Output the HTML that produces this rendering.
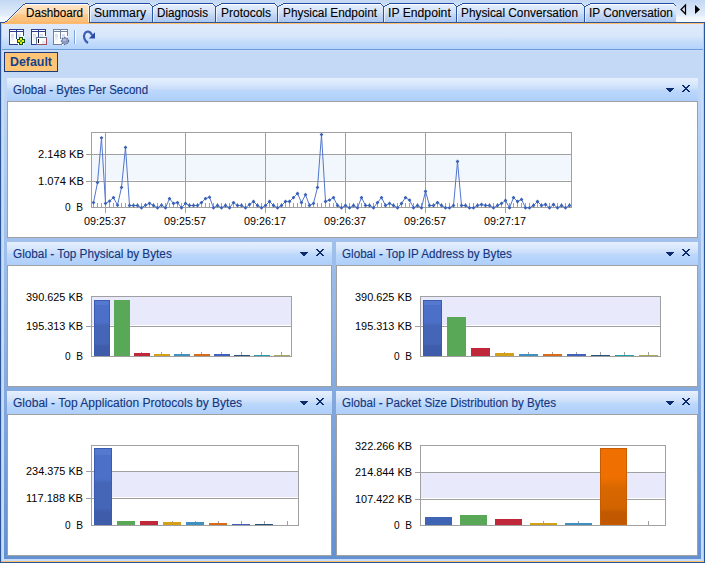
<!DOCTYPE html><html><head><meta charset="utf-8"><style>
html,body{margin:0;padding:0;}
body{width:705px;height:563px;overflow:hidden;position:relative;background:#c4d9f6;font-family:'Liberation Sans', sans-serif;}
.a{position:absolute;}
</style></head><body>
<div class="a" style="left:0;top:0;width:705px;height:22px;background:linear-gradient(to bottom,#c3d8f4 0px,#e5eefb 16px,#f1f6fd 17px,#f5f9fe 22px)"></div>
<div class="a" style="left:0;top:22px;width:705px;height:541px;background:linear-gradient(to bottom,#c4d9f6 0px,#c4d9f6 55px,#b6d1f5 110px,#6390d0 537px)"></div>
<div class="a" style="left:0;top:22px;width:703px;height:539px;border:1px solid #2c5697"></div>
<div class="a" style="left:1px;top:23px;width:701px;height:537px;border:1px solid #ffbf6f"></div>
<div class="a" style="left:2px;top:24px;width:2px;height:535px;background:#c6dcf8"></div>
<div class="a" style="left:701px;top:24px;width:2px;height:535px;background:#c6dcf8"></div>
<div class="a" style="left:2px;top:559px;width:701px;height:2px;background:#c6dcf8"></div>
<div class="a" style="left:2px;top:24px;width:701px;height:25px;background:linear-gradient(to bottom,#dfeafb 0px,#d8e7fb 12px,#c3dcfb 18px,#b3d3fb 25px)"></div>
<div class="a" style="left:2px;top:49px;width:701px;height:1px;background:#6b9bd8"></div>
<div class="a" style="left:2px;top:50px;width:701px;height:1px;background:#c9ddf9"></div>
<svg class="a" style="left:0;top:0" width="705" height="26" shape-rendering="crispEdges"><defs><linearGradient id="tg" x1="0" y1="0" x2="0" y2="1"><stop offset="0" stop-color="#e8f0fc"/><stop offset="0.5" stop-color="#d2e1f7"/><stop offset="0.55" stop-color="#c6d9f5"/><stop offset="1" stop-color="#aac4ef"/></linearGradient><linearGradient id="og" x1="0" y1="0" x2="0" y2="1"><stop offset="0" stop-color="#fee6cb"/><stop offset="0.5" stop-color="#fdd8ac"/><stop offset="0.56" stop-color="#fcca8e"/><stop offset="1" stop-color="#fbb76a"/></linearGradient><clipPath id="tclip"><rect x="0" y="0" width="676" height="26"/></clipPath></defs><g clip-path="url(#tclip)"><polygon points="89,23 89,6 95,3 150,3 152,5 152,23" fill="url(#tg)"/><rect x="96" y="4" width="54" height="1" fill="#ffffff"/><rect x="90" y="7" width="1" height="15" fill="#f0f6fe" opacity="0.8"/><rect x="95" y="3" width="55" height="1" fill="#1f4ca0"/><rect x="89" y="6" width="1" height="17" fill="#2a55a3"/><rect x="90" y="6" width="1" height="1" fill="#2a55a3"/><rect x="91" y="5" width="2" height="1" fill="#2a55a3"/><rect x="93" y="4" width="2" height="1" fill="#2a55a3"/><rect x="150" y="4" width="1" height="1" fill="#2a55a3"/><rect x="151" y="5" width="1" height="1" fill="#2a55a3"/><polygon points="152,23 152,6 158,3 213,3 215,5 215,23" fill="url(#tg)"/><rect x="159" y="4" width="54" height="1" fill="#ffffff"/><rect x="153" y="7" width="1" height="15" fill="#f0f6fe" opacity="0.8"/><rect x="158" y="3" width="55" height="1" fill="#1f4ca0"/><rect x="152" y="6" width="1" height="17" fill="#2a55a3"/><rect x="153" y="6" width="1" height="1" fill="#2a55a3"/><rect x="154" y="5" width="2" height="1" fill="#2a55a3"/><rect x="156" y="4" width="2" height="1" fill="#2a55a3"/><rect x="213" y="4" width="1" height="1" fill="#2a55a3"/><rect x="214" y="5" width="1" height="1" fill="#2a55a3"/><polygon points="215,23 215,6 221,3 275,3 277,5 277,23" fill="url(#tg)"/><rect x="222" y="4" width="53" height="1" fill="#ffffff"/><rect x="216" y="7" width="1" height="15" fill="#f0f6fe" opacity="0.8"/><rect x="221" y="3" width="54" height="1" fill="#1f4ca0"/><rect x="215" y="6" width="1" height="17" fill="#2a55a3"/><rect x="216" y="6" width="1" height="1" fill="#2a55a3"/><rect x="217" y="5" width="2" height="1" fill="#2a55a3"/><rect x="219" y="4" width="2" height="1" fill="#2a55a3"/><rect x="275" y="4" width="1" height="1" fill="#2a55a3"/><rect x="276" y="5" width="1" height="1" fill="#2a55a3"/><polygon points="277,23 277,6 283,3 381,3 383,5 383,23" fill="url(#tg)"/><rect x="284" y="4" width="97" height="1" fill="#ffffff"/><rect x="278" y="7" width="1" height="15" fill="#f0f6fe" opacity="0.8"/><rect x="283" y="3" width="98" height="1" fill="#1f4ca0"/><rect x="277" y="6" width="1" height="17" fill="#2a55a3"/><rect x="278" y="6" width="1" height="1" fill="#2a55a3"/><rect x="279" y="5" width="2" height="1" fill="#2a55a3"/><rect x="281" y="4" width="2" height="1" fill="#2a55a3"/><rect x="381" y="4" width="1" height="1" fill="#2a55a3"/><rect x="382" y="5" width="1" height="1" fill="#2a55a3"/><polygon points="383,23 383,6 389,3 454,3 456,5 456,23" fill="url(#tg)"/><rect x="390" y="4" width="64" height="1" fill="#ffffff"/><rect x="384" y="7" width="1" height="15" fill="#f0f6fe" opacity="0.8"/><rect x="389" y="3" width="65" height="1" fill="#1f4ca0"/><rect x="383" y="6" width="1" height="17" fill="#2a55a3"/><rect x="384" y="6" width="1" height="1" fill="#2a55a3"/><rect x="385" y="5" width="2" height="1" fill="#2a55a3"/><rect x="387" y="4" width="2" height="1" fill="#2a55a3"/><rect x="454" y="4" width="1" height="1" fill="#2a55a3"/><rect x="455" y="5" width="1" height="1" fill="#2a55a3"/><polygon points="456,23 456,6 462,3 582,3 584,5 584,23" fill="url(#tg)"/><rect x="463" y="4" width="119" height="1" fill="#ffffff"/><rect x="457" y="7" width="1" height="15" fill="#f0f6fe" opacity="0.8"/><rect x="462" y="3" width="120" height="1" fill="#1f4ca0"/><rect x="456" y="6" width="1" height="17" fill="#2a55a3"/><rect x="457" y="6" width="1" height="1" fill="#2a55a3"/><rect x="458" y="5" width="2" height="1" fill="#2a55a3"/><rect x="460" y="4" width="2" height="1" fill="#2a55a3"/><rect x="582" y="4" width="1" height="1" fill="#2a55a3"/><rect x="583" y="5" width="1" height="1" fill="#2a55a3"/><polygon points="584,23 584,6 590,3 674,3 676,5 676,23" fill="url(#tg)"/><rect x="591" y="4" width="83" height="1" fill="#ffffff"/><rect x="585" y="7" width="1" height="15" fill="#f0f6fe" opacity="0.8"/><rect x="590" y="3" width="84" height="1" fill="#1f4ca0"/><rect x="584" y="6" width="1" height="17" fill="#2a55a3"/><rect x="585" y="6" width="1" height="1" fill="#2a55a3"/><rect x="586" y="5" width="2" height="1" fill="#2a55a3"/><rect x="588" y="4" width="2" height="1" fill="#2a55a3"/><rect x="674" y="4" width="1" height="1" fill="#2a55a3"/><rect x="675" y="5" width="1" height="1" fill="#2a55a3"/></g><rect x="0" y="22" width="705" height="1" fill="#2c5697"/><polygon points="5,23 5,22 24,3 88,3 89,4 89,24 1,24 1,23" fill="url(#og)"/><rect x="7" y="20" width="1" height="1" fill="#2a55a3"/><rect x="8" y="20" width="1" height="1" fill="#fff3e3"/><rect x="8" y="19" width="1" height="1" fill="#2a55a3"/><rect x="9" y="19" width="1" height="1" fill="#fff3e3"/><rect x="9" y="18" width="1" height="1" fill="#2a55a3"/><rect x="10" y="18" width="1" height="1" fill="#fff3e3"/><rect x="10" y="17" width="1" height="1" fill="#2a55a3"/><rect x="11" y="17" width="1" height="1" fill="#fff3e3"/><rect x="11" y="16" width="1" height="1" fill="#2a55a3"/><rect x="12" y="16" width="1" height="1" fill="#fff3e3"/><rect x="12" y="15" width="1" height="1" fill="#2a55a3"/><rect x="13" y="15" width="1" height="1" fill="#fff3e3"/><rect x="13" y="14" width="1" height="1" fill="#2a55a3"/><rect x="14" y="14" width="1" height="1" fill="#fff3e3"/><rect x="14" y="13" width="1" height="1" fill="#2a55a3"/><rect x="15" y="13" width="1" height="1" fill="#fff3e3"/><rect x="15" y="12" width="1" height="1" fill="#2a55a3"/><rect x="16" y="12" width="1" height="1" fill="#fff3e3"/><rect x="16" y="11" width="1" height="1" fill="#2a55a3"/><rect x="17" y="11" width="1" height="1" fill="#fff3e3"/><rect x="17" y="10" width="1" height="1" fill="#2a55a3"/><rect x="18" y="10" width="1" height="1" fill="#fff3e3"/><rect x="18" y="9" width="1" height="1" fill="#2a55a3"/><rect x="19" y="9" width="1" height="1" fill="#fff3e3"/><rect x="19" y="8" width="1" height="1" fill="#2a55a3"/><rect x="20" y="8" width="1" height="1" fill="#fff3e3"/><rect x="20" y="7" width="1" height="1" fill="#2a55a3"/><rect x="21" y="7" width="1" height="1" fill="#fff3e3"/><rect x="21" y="6" width="1" height="1" fill="#2a55a3"/><rect x="22" y="6" width="1" height="1" fill="#fff3e3"/><rect x="22" y="5" width="1" height="1" fill="#2a55a3"/><rect x="23" y="5" width="1" height="1" fill="#fff3e3"/><rect x="5" y="21" width="2" height="1" fill="#2a55a3"/><rect x="23" y="4" width="2" height="1" fill="#2a55a3"/><rect x="25" y="3" width="63" height="1" fill="#1f4ca0"/><rect x="25" y="4" width="62" height="1" fill="#ffffff"/><rect x="88" y="4" width="1" height="1" fill="#2a55a3"/><rect x="88" y="5" width="1" height="17" fill="#fff3e4"/><rect x="0" y="22" width="1" height="1" fill="#2c5697"/><rect x="1" y="23" width="88" height="1" fill="#fdb96c"/><rect x="5" y="22" width="83" height="1" fill="#fbb86a"/><polygon points="685.5,5 685.5,14 681,9.5" fill="none" stroke="#000" stroke-width="1.25" shape-rendering="auto"/><polygon points="695,5 695,14 700,9.5" fill="#000" shape-rendering="auto"/></svg>
<div class="a" style="left:0;top:0;width:676px;height:24px;overflow:hidden"><div style="position:absolute;left:25.5px;top:3px;font:normal 12px/20px 'Liberation Sans', sans-serif;color:#000;white-space:nowrap;-webkit-text-stroke:0.12px #000;transform:scaleX(0.9710);transform-origin:0 0;">Dashboard</div><div style="position:absolute;left:93.5px;top:3px;font:normal 12px/20px 'Liberation Sans', sans-serif;color:#000;white-space:nowrap;-webkit-text-stroke:0.12px #000;transform:scaleX(1.0129);transform-origin:0 0;">Summary</div><div style="position:absolute;left:156.5px;top:3px;font:normal 12px/20px 'Liberation Sans', sans-serif;color:#000;white-space:nowrap;-webkit-text-stroke:0.12px #000;transform:scaleX(0.9679);transform-origin:0 0;">Diagnosis</div><div style="position:absolute;left:220.5px;top:3px;font:normal 12px/20px 'Liberation Sans', sans-serif;color:#000;white-space:nowrap;-webkit-text-stroke:0.12px #000;transform:scaleX(0.9996);transform-origin:0 0;">Protocols</div><div style="position:absolute;left:282.5px;top:3px;font:normal 12px/20px 'Liberation Sans', sans-serif;color:#000;white-space:nowrap;-webkit-text-stroke:0.12px #000;transform:scaleX(0.9854);transform-origin:0 0;">Physical Endpoint</div><div style="position:absolute;left:387.5px;top:3px;font:normal 12px/20px 'Liberation Sans', sans-serif;color:#000;white-space:nowrap;-webkit-text-stroke:0.12px #000;transform:scaleX(1.0154);transform-origin:0 0;">IP Endpoint</div><div style="position:absolute;left:460.5px;top:3px;font:normal 12px/20px 'Liberation Sans', sans-serif;color:#000;white-space:nowrap;-webkit-text-stroke:0.12px #000;transform:scaleX(0.9855);transform-origin:0 0;">Physical Conversation</div><div style="position:absolute;left:588.5px;top:3px;font:normal 12px/20px 'Liberation Sans', sans-serif;color:#000;white-space:nowrap;-webkit-text-stroke:0.12px #000;transform:scaleX(0.9839);transform-origin:0 0;">IP Conversation</div></div>
<svg class="a" style="left:0;top:24px" width="120" height="26" shape-rendering="crispEdges">
<defs><linearGradient id="ig" x1="0" y1="0" x2="0" y2="1"><stop offset="0" stop-color="#d2dbec"/><stop offset="1" stop-color="#ffffff"/></linearGradient>
<g id="tbl">
<rect x="0" y="0" width="15" height="16" fill="#ffffff"/>
<rect x="2" y="5" width="3" height="9" fill="url(#ig)"/><rect x="9" y="5" width="3" height="9" fill="url(#ig)"/>
<rect x="0" y="0" width="15" height="1" fill="currentColor"/><rect x="0" y="2" width="15" height="1" fill="currentColor"/>
<rect x="0" y="0" width="1" height="16" fill="currentColor"/><rect x="14" y="0" width="1" height="7" fill="currentColor"/>
<rect x="7" y="0" width="1" height="10" fill="currentColor"/><rect x="0" y="15" width="9" height="1" fill="currentColor"/>
</g></defs>
<g transform="translate(9,5)" style="color:#2e3d8e"><use href="#tbl"/>
<rect x="10" y="8" width="4" height="8" fill="#0b5a10"/><rect x="8" y="10" width="8" height="4" fill="#0b5a10"/>
<rect x="11" y="9" width="2" height="6" fill="#ecec10"/><rect x="9" y="11" width="6" height="2" fill="#ecec10"/>
<rect x="11" y="11" width="2" height="2" fill="#5aa05a"/>
</g>
<g transform="translate(31,5)" style="color:#2e3d8e"><use href="#tbl"/>
<rect x="5" y="8" width="11" height="8" fill="#5b7294"/>
<rect x="6" y="9" width="9" height="6" fill="#ffffff"/><rect x="11" y="12" width="4" height="3" fill="#e6e8ee"/>
<rect x="6" y="15" width="10" height="1" fill="#a05060"/><rect x="15" y="9" width="1" height="7" fill="#a05060"/>
<rect x="7" y="10" width="1" height="4" fill="#000"/>
</g>
<g transform="translate(53,5)" style="color:#6f80a2"><use href="#tbl"/>
<circle cx="12" cy="12" r="3.6" fill="#8a9ac0" stroke="#56688c" stroke-width="1.2" stroke-dasharray="1.3 1.3" shape-rendering="auto"/>
<rect x="10" y="10" width="3" height="2" fill="#b0bcd8"/>
</g>
<rect x="74" y="6" width="1" height="14" fill="#7aa6e0"/><rect x="75" y="6" width="1" height="14" fill="#ffffff"/>
<path d="M88,19 C84.5,17 83,12.5 84.8,9.3 C86.8,6.5 90.2,7 92.2,11.2" fill="none" stroke="#3c5fb6" stroke-width="2.2" shape-rendering="auto"/>
<polygon points="95,8.3 95,14.6 88.8,14.6" fill="#2c4aa8" shape-rendering="auto"/>
</svg>
<div class="a" style="left:4px;top:52px;width:52px;height:18px;border:1px solid #1d3b78;background:#ffc576"></div>
<div style="position:absolute;left:9.5px;top:52px;font:bold 12px/20px 'Liberation Sans', sans-serif;color:#15428b;white-space:nowrap;transform:scaleX(1.0327);transform-origin:0 0;">Default</div>
<div class="a" style="left:7px;top:78px;width:691px;height:23px;background:linear-gradient(to bottom,#e6f0fd 0px,#d8e7fc 6px,#c9ddfa 11px,#bdd8fb 12px,#b4d3fb 18px,#aecffb 23px)"></div>
<div class="a" style="left:7px;top:101px;width:689px;height:135px;border:1px solid #a0a0a0;background:#fff"></div>
<div style="position:absolute;left:13.0px;top:80px;font:normal 12px/20px 'Liberation Sans', sans-serif;color:#13367f;white-space:nowrap;-webkit-text-stroke:0.12px #13367f;transform:scaleX(0.9547);transform-origin:0 0;">Global - Bytes Per Second</div>
<svg class="a" style="left:664px;top:78px" width="30" height="23" shape-rendering="crispEdges">
<rect x="2" y="10" width="8" height="1" fill="#0c2a6e"/><rect x="3" y="11" width="6" height="1" fill="#0c2a6e"/><rect x="4" y="12" width="4" height="1" fill="#0c2a6e"/><rect x="5" y="13" width="2" height="1" fill="#0c2a6e"/>
<rect x="18" y="7" width="2" height="1" fill="#0c2a6e"/><rect x="24" y="7" width="2" height="1" fill="#0c2a6e"/><rect x="19" y="8" width="2" height="1" fill="#0c2a6e"/><rect x="23" y="8" width="2" height="1" fill="#0c2a6e"/><rect x="20" y="9" width="4" height="1" fill="#0c2a6e"/><rect x="21" y="10" width="2" height="1" fill="#0c2a6e"/><rect x="20" y="11" width="4" height="1" fill="#0c2a6e"/><rect x="19" y="12" width="2" height="1" fill="#0c2a6e"/><rect x="23" y="12" width="2" height="1" fill="#0c2a6e"/><rect x="18" y="13" width="2" height="1" fill="#0c2a6e"/><rect x="24" y="13" width="2" height="1" fill="#0c2a6e"/></svg>
<div class="a" style="left:7px;top:242px;width:325px;height:23px;background:linear-gradient(to bottom,#e6f0fd 0px,#d8e7fc 6px,#c9ddfa 11px,#bdd8fb 12px,#b4d3fb 18px,#aecffb 23px)"></div>
<div class="a" style="left:7px;top:265px;width:323px;height:120px;border:1px solid #a0a0a0;background:#fff"></div>
<div style="position:absolute;left:13.0px;top:244px;font:normal 12px/20px 'Liberation Sans', sans-serif;color:#13367f;white-space:nowrap;-webkit-text-stroke:0.12px #13367f;transform:scaleX(0.9811);transform-origin:0 0;">Global - Top Physical by Bytes</div>
<svg class="a" style="left:298px;top:242px" width="30" height="23" shape-rendering="crispEdges">
<rect x="2" y="10" width="8" height="1" fill="#0c2a6e"/><rect x="3" y="11" width="6" height="1" fill="#0c2a6e"/><rect x="4" y="12" width="4" height="1" fill="#0c2a6e"/><rect x="5" y="13" width="2" height="1" fill="#0c2a6e"/>
<rect x="18" y="7" width="2" height="1" fill="#0c2a6e"/><rect x="24" y="7" width="2" height="1" fill="#0c2a6e"/><rect x="19" y="8" width="2" height="1" fill="#0c2a6e"/><rect x="23" y="8" width="2" height="1" fill="#0c2a6e"/><rect x="20" y="9" width="4" height="1" fill="#0c2a6e"/><rect x="21" y="10" width="2" height="1" fill="#0c2a6e"/><rect x="20" y="11" width="4" height="1" fill="#0c2a6e"/><rect x="19" y="12" width="2" height="1" fill="#0c2a6e"/><rect x="23" y="12" width="2" height="1" fill="#0c2a6e"/><rect x="18" y="13" width="2" height="1" fill="#0c2a6e"/><rect x="24" y="13" width="2" height="1" fill="#0c2a6e"/></svg>
<div class="a" style="left:336px;top:242px;width:362px;height:23px;background:linear-gradient(to bottom,#e6f0fd 0px,#d8e7fc 6px,#c9ddfa 11px,#bdd8fb 12px,#b4d3fb 18px,#aecffb 23px)"></div>
<div class="a" style="left:336px;top:265px;width:360px;height:120px;border:1px solid #a0a0a0;background:#fff"></div>
<div style="position:absolute;left:342.0px;top:244px;font:normal 12px/20px 'Liberation Sans', sans-serif;color:#13367f;white-space:nowrap;-webkit-text-stroke:0.12px #13367f;transform:scaleX(0.9711);transform-origin:0 0;">Global - Top IP Address by Bytes</div>
<svg class="a" style="left:664px;top:242px" width="30" height="23" shape-rendering="crispEdges">
<rect x="2" y="10" width="8" height="1" fill="#0c2a6e"/><rect x="3" y="11" width="6" height="1" fill="#0c2a6e"/><rect x="4" y="12" width="4" height="1" fill="#0c2a6e"/><rect x="5" y="13" width="2" height="1" fill="#0c2a6e"/>
<rect x="18" y="7" width="2" height="1" fill="#0c2a6e"/><rect x="24" y="7" width="2" height="1" fill="#0c2a6e"/><rect x="19" y="8" width="2" height="1" fill="#0c2a6e"/><rect x="23" y="8" width="2" height="1" fill="#0c2a6e"/><rect x="20" y="9" width="4" height="1" fill="#0c2a6e"/><rect x="21" y="10" width="2" height="1" fill="#0c2a6e"/><rect x="20" y="11" width="4" height="1" fill="#0c2a6e"/><rect x="19" y="12" width="2" height="1" fill="#0c2a6e"/><rect x="23" y="12" width="2" height="1" fill="#0c2a6e"/><rect x="18" y="13" width="2" height="1" fill="#0c2a6e"/><rect x="24" y="13" width="2" height="1" fill="#0c2a6e"/></svg>
<div class="a" style="left:7px;top:391px;width:325px;height:23px;background:linear-gradient(to bottom,#e6f0fd 0px,#d8e7fc 6px,#c9ddfa 11px,#bdd8fb 12px,#b4d3fb 18px,#aecffb 23px)"></div>
<div class="a" style="left:7px;top:414px;width:323px;height:140px;border:1px solid #a0a0a0;background:#fff"></div>
<div style="position:absolute;left:13.0px;top:393px;font:normal 12px/20px 'Liberation Sans', sans-serif;color:#13367f;white-space:nowrap;-webkit-text-stroke:0.12px #13367f;transform:scaleX(1.0024);transform-origin:0 0;">Global - Top Application Protocols by Bytes</div>
<svg class="a" style="left:298px;top:391px" width="30" height="23" shape-rendering="crispEdges">
<rect x="2" y="10" width="8" height="1" fill="#0c2a6e"/><rect x="3" y="11" width="6" height="1" fill="#0c2a6e"/><rect x="4" y="12" width="4" height="1" fill="#0c2a6e"/><rect x="5" y="13" width="2" height="1" fill="#0c2a6e"/>
<rect x="18" y="7" width="2" height="1" fill="#0c2a6e"/><rect x="24" y="7" width="2" height="1" fill="#0c2a6e"/><rect x="19" y="8" width="2" height="1" fill="#0c2a6e"/><rect x="23" y="8" width="2" height="1" fill="#0c2a6e"/><rect x="20" y="9" width="4" height="1" fill="#0c2a6e"/><rect x="21" y="10" width="2" height="1" fill="#0c2a6e"/><rect x="20" y="11" width="4" height="1" fill="#0c2a6e"/><rect x="19" y="12" width="2" height="1" fill="#0c2a6e"/><rect x="23" y="12" width="2" height="1" fill="#0c2a6e"/><rect x="18" y="13" width="2" height="1" fill="#0c2a6e"/><rect x="24" y="13" width="2" height="1" fill="#0c2a6e"/></svg>
<div class="a" style="left:336px;top:391px;width:362px;height:23px;background:linear-gradient(to bottom,#e6f0fd 0px,#d8e7fc 6px,#c9ddfa 11px,#bdd8fb 12px,#b4d3fb 18px,#aecffb 23px)"></div>
<div class="a" style="left:336px;top:414px;width:360px;height:140px;border:1px solid #a0a0a0;background:#fff"></div>
<div style="position:absolute;left:342.0px;top:393px;font:normal 12px/20px 'Liberation Sans', sans-serif;color:#13367f;white-space:nowrap;-webkit-text-stroke:0.12px #13367f;transform:scaleX(0.9665);transform-origin:0 0;">Global - Packet Size Distribution by Bytes</div>
<svg class="a" style="left:664px;top:391px" width="30" height="23" shape-rendering="crispEdges">
<rect x="2" y="10" width="8" height="1" fill="#0c2a6e"/><rect x="3" y="11" width="6" height="1" fill="#0c2a6e"/><rect x="4" y="12" width="4" height="1" fill="#0c2a6e"/><rect x="5" y="13" width="2" height="1" fill="#0c2a6e"/>
<rect x="18" y="7" width="2" height="1" fill="#0c2a6e"/><rect x="24" y="7" width="2" height="1" fill="#0c2a6e"/><rect x="19" y="8" width="2" height="1" fill="#0c2a6e"/><rect x="23" y="8" width="2" height="1" fill="#0c2a6e"/><rect x="20" y="9" width="4" height="1" fill="#0c2a6e"/><rect x="21" y="10" width="2" height="1" fill="#0c2a6e"/><rect x="20" y="11" width="4" height="1" fill="#0c2a6e"/><rect x="19" y="12" width="2" height="1" fill="#0c2a6e"/><rect x="23" y="12" width="2" height="1" fill="#0c2a6e"/><rect x="18" y="13" width="2" height="1" fill="#0c2a6e"/><rect x="24" y="13" width="2" height="1" fill="#0c2a6e"/></svg>
<svg class="a" style="left:0;top:0" width="705" height="563"><rect x="92" y="155" width="479" height="25" fill="#f2f6fd" shape-rendering="crispEdges"/><rect x="91" y="132" width="481" height="1" fill="#a0a0a0" shape-rendering="crispEdges"/><rect x="91" y="207" width="481" height="1" fill="#a0a0a0" shape-rendering="crispEdges"/><rect x="91" y="132" width="1" height="76" fill="#a0a0a0" shape-rendering="crispEdges"/><rect x="571" y="132" width="1" height="76" fill="#a0a0a0" shape-rendering="crispEdges"/><rect x="86" y="154" width="486" height="1" fill="#a0a0a0" shape-rendering="crispEdges"/><rect x="86" y="181" width="486" height="1" fill="#a0a0a0" shape-rendering="crispEdges"/><rect x="105" y="132" width="1" height="81" fill="#a0a0a0" shape-rendering="crispEdges"/><rect x="185" y="132" width="1" height="81" fill="#a0a0a0" shape-rendering="crispEdges"/><rect x="265" y="132" width="1" height="81" fill="#a0a0a0" shape-rendering="crispEdges"/><rect x="345" y="132" width="1" height="81" fill="#a0a0a0" shape-rendering="crispEdges"/><rect x="425" y="132" width="1" height="81" fill="#a0a0a0" shape-rendering="crispEdges"/><rect x="505" y="132" width="1" height="81" fill="#a0a0a0" shape-rendering="crispEdges"/><rect x="93" y="203" width="1" height="5" fill="#a0a0a0" shape-rendering="crispEdges"/><rect x="97" y="203" width="1" height="5" fill="#a0a0a0" shape-rendering="crispEdges"/><rect x="101" y="203" width="1" height="5" fill="#a0a0a0" shape-rendering="crispEdges"/><rect x="109" y="203" width="1" height="5" fill="#a0a0a0" shape-rendering="crispEdges"/><rect x="113" y="203" width="1" height="5" fill="#a0a0a0" shape-rendering="crispEdges"/><rect x="117" y="203" width="1" height="5" fill="#a0a0a0" shape-rendering="crispEdges"/><rect x="121" y="203" width="1" height="5" fill="#a0a0a0" shape-rendering="crispEdges"/><rect x="125" y="203" width="1" height="5" fill="#a0a0a0" shape-rendering="crispEdges"/><rect x="129" y="203" width="1" height="5" fill="#a0a0a0" shape-rendering="crispEdges"/><rect x="133" y="203" width="1" height="5" fill="#a0a0a0" shape-rendering="crispEdges"/><rect x="137" y="203" width="1" height="5" fill="#a0a0a0" shape-rendering="crispEdges"/><rect x="141" y="203" width="1" height="5" fill="#a0a0a0" shape-rendering="crispEdges"/><rect x="145" y="203" width="1" height="5" fill="#a0a0a0" shape-rendering="crispEdges"/><rect x="149" y="203" width="1" height="5" fill="#a0a0a0" shape-rendering="crispEdges"/><rect x="153" y="203" width="1" height="5" fill="#a0a0a0" shape-rendering="crispEdges"/><rect x="157" y="203" width="1" height="5" fill="#a0a0a0" shape-rendering="crispEdges"/><rect x="161" y="203" width="1" height="5" fill="#a0a0a0" shape-rendering="crispEdges"/><rect x="165" y="203" width="1" height="5" fill="#a0a0a0" shape-rendering="crispEdges"/><rect x="169" y="203" width="1" height="5" fill="#a0a0a0" shape-rendering="crispEdges"/><rect x="173" y="203" width="1" height="5" fill="#a0a0a0" shape-rendering="crispEdges"/><rect x="177" y="203" width="1" height="5" fill="#a0a0a0" shape-rendering="crispEdges"/><rect x="181" y="203" width="1" height="5" fill="#a0a0a0" shape-rendering="crispEdges"/><rect x="189" y="203" width="1" height="5" fill="#a0a0a0" shape-rendering="crispEdges"/><rect x="193" y="203" width="1" height="5" fill="#a0a0a0" shape-rendering="crispEdges"/><rect x="197" y="203" width="1" height="5" fill="#a0a0a0" shape-rendering="crispEdges"/><rect x="201" y="203" width="1" height="5" fill="#a0a0a0" shape-rendering="crispEdges"/><rect x="205" y="203" width="1" height="5" fill="#a0a0a0" shape-rendering="crispEdges"/><rect x="209" y="203" width="1" height="5" fill="#a0a0a0" shape-rendering="crispEdges"/><rect x="213" y="203" width="1" height="5" fill="#a0a0a0" shape-rendering="crispEdges"/><rect x="217" y="203" width="1" height="5" fill="#a0a0a0" shape-rendering="crispEdges"/><rect x="221" y="203" width="1" height="5" fill="#a0a0a0" shape-rendering="crispEdges"/><rect x="225" y="203" width="1" height="5" fill="#a0a0a0" shape-rendering="crispEdges"/><rect x="229" y="203" width="1" height="5" fill="#a0a0a0" shape-rendering="crispEdges"/><rect x="233" y="203" width="1" height="5" fill="#a0a0a0" shape-rendering="crispEdges"/><rect x="237" y="203" width="1" height="5" fill="#a0a0a0" shape-rendering="crispEdges"/><rect x="241" y="203" width="1" height="5" fill="#a0a0a0" shape-rendering="crispEdges"/><rect x="245" y="203" width="1" height="5" fill="#a0a0a0" shape-rendering="crispEdges"/><rect x="249" y="203" width="1" height="5" fill="#a0a0a0" shape-rendering="crispEdges"/><rect x="253" y="203" width="1" height="5" fill="#a0a0a0" shape-rendering="crispEdges"/><rect x="257" y="203" width="1" height="5" fill="#a0a0a0" shape-rendering="crispEdges"/><rect x="261" y="203" width="1" height="5" fill="#a0a0a0" shape-rendering="crispEdges"/><rect x="269" y="203" width="1" height="5" fill="#a0a0a0" shape-rendering="crispEdges"/><rect x="273" y="203" width="1" height="5" fill="#a0a0a0" shape-rendering="crispEdges"/><rect x="277" y="203" width="1" height="5" fill="#a0a0a0" shape-rendering="crispEdges"/><rect x="281" y="203" width="1" height="5" fill="#a0a0a0" shape-rendering="crispEdges"/><rect x="285" y="203" width="1" height="5" fill="#a0a0a0" shape-rendering="crispEdges"/><rect x="289" y="203" width="1" height="5" fill="#a0a0a0" shape-rendering="crispEdges"/><rect x="293" y="203" width="1" height="5" fill="#a0a0a0" shape-rendering="crispEdges"/><rect x="297" y="203" width="1" height="5" fill="#a0a0a0" shape-rendering="crispEdges"/><rect x="301" y="203" width="1" height="5" fill="#a0a0a0" shape-rendering="crispEdges"/><rect x="305" y="203" width="1" height="5" fill="#a0a0a0" shape-rendering="crispEdges"/><rect x="309" y="203" width="1" height="5" fill="#a0a0a0" shape-rendering="crispEdges"/><rect x="313" y="203" width="1" height="5" fill="#a0a0a0" shape-rendering="crispEdges"/><rect x="317" y="203" width="1" height="5" fill="#a0a0a0" shape-rendering="crispEdges"/><rect x="321" y="203" width="1" height="5" fill="#a0a0a0" shape-rendering="crispEdges"/><rect x="325" y="203" width="1" height="5" fill="#a0a0a0" shape-rendering="crispEdges"/><rect x="329" y="203" width="1" height="5" fill="#a0a0a0" shape-rendering="crispEdges"/><rect x="333" y="203" width="1" height="5" fill="#a0a0a0" shape-rendering="crispEdges"/><rect x="337" y="203" width="1" height="5" fill="#a0a0a0" shape-rendering="crispEdges"/><rect x="341" y="203" width="1" height="5" fill="#a0a0a0" shape-rendering="crispEdges"/><rect x="349" y="203" width="1" height="5" fill="#a0a0a0" shape-rendering="crispEdges"/><rect x="353" y="203" width="1" height="5" fill="#a0a0a0" shape-rendering="crispEdges"/><rect x="357" y="203" width="1" height="5" fill="#a0a0a0" shape-rendering="crispEdges"/><rect x="361" y="203" width="1" height="5" fill="#a0a0a0" shape-rendering="crispEdges"/><rect x="365" y="203" width="1" height="5" fill="#a0a0a0" shape-rendering="crispEdges"/><rect x="369" y="203" width="1" height="5" fill="#a0a0a0" shape-rendering="crispEdges"/><rect x="373" y="203" width="1" height="5" fill="#a0a0a0" shape-rendering="crispEdges"/><rect x="377" y="203" width="1" height="5" fill="#a0a0a0" shape-rendering="crispEdges"/><rect x="381" y="203" width="1" height="5" fill="#a0a0a0" shape-rendering="crispEdges"/><rect x="385" y="203" width="1" height="5" fill="#a0a0a0" shape-rendering="crispEdges"/><rect x="389" y="203" width="1" height="5" fill="#a0a0a0" shape-rendering="crispEdges"/><rect x="393" y="203" width="1" height="5" fill="#a0a0a0" shape-rendering="crispEdges"/><rect x="397" y="203" width="1" height="5" fill="#a0a0a0" shape-rendering="crispEdges"/><rect x="401" y="203" width="1" height="5" fill="#a0a0a0" shape-rendering="crispEdges"/><rect x="405" y="203" width="1" height="5" fill="#a0a0a0" shape-rendering="crispEdges"/><rect x="409" y="203" width="1" height="5" fill="#a0a0a0" shape-rendering="crispEdges"/><rect x="413" y="203" width="1" height="5" fill="#a0a0a0" shape-rendering="crispEdges"/><rect x="417" y="203" width="1" height="5" fill="#a0a0a0" shape-rendering="crispEdges"/><rect x="421" y="203" width="1" height="5" fill="#a0a0a0" shape-rendering="crispEdges"/><rect x="429" y="203" width="1" height="5" fill="#a0a0a0" shape-rendering="crispEdges"/><rect x="433" y="203" width="1" height="5" fill="#a0a0a0" shape-rendering="crispEdges"/><rect x="437" y="203" width="1" height="5" fill="#a0a0a0" shape-rendering="crispEdges"/><rect x="441" y="203" width="1" height="5" fill="#a0a0a0" shape-rendering="crispEdges"/><rect x="445" y="203" width="1" height="5" fill="#a0a0a0" shape-rendering="crispEdges"/><rect x="449" y="203" width="1" height="5" fill="#a0a0a0" shape-rendering="crispEdges"/><rect x="453" y="203" width="1" height="5" fill="#a0a0a0" shape-rendering="crispEdges"/><rect x="457" y="203" width="1" height="5" fill="#a0a0a0" shape-rendering="crispEdges"/><rect x="461" y="203" width="1" height="5" fill="#a0a0a0" shape-rendering="crispEdges"/><rect x="465" y="203" width="1" height="5" fill="#a0a0a0" shape-rendering="crispEdges"/><rect x="469" y="203" width="1" height="5" fill="#a0a0a0" shape-rendering="crispEdges"/><rect x="473" y="203" width="1" height="5" fill="#a0a0a0" shape-rendering="crispEdges"/><rect x="477" y="203" width="1" height="5" fill="#a0a0a0" shape-rendering="crispEdges"/><rect x="481" y="203" width="1" height="5" fill="#a0a0a0" shape-rendering="crispEdges"/><rect x="485" y="203" width="1" height="5" fill="#a0a0a0" shape-rendering="crispEdges"/><rect x="489" y="203" width="1" height="5" fill="#a0a0a0" shape-rendering="crispEdges"/><rect x="493" y="203" width="1" height="5" fill="#a0a0a0" shape-rendering="crispEdges"/><rect x="497" y="203" width="1" height="5" fill="#a0a0a0" shape-rendering="crispEdges"/><rect x="501" y="203" width="1" height="5" fill="#a0a0a0" shape-rendering="crispEdges"/><rect x="509" y="203" width="1" height="5" fill="#a0a0a0" shape-rendering="crispEdges"/><rect x="513" y="203" width="1" height="5" fill="#a0a0a0" shape-rendering="crispEdges"/><rect x="517" y="203" width="1" height="5" fill="#a0a0a0" shape-rendering="crispEdges"/><rect x="521" y="203" width="1" height="5" fill="#a0a0a0" shape-rendering="crispEdges"/><rect x="525" y="203" width="1" height="5" fill="#a0a0a0" shape-rendering="crispEdges"/><rect x="529" y="203" width="1" height="5" fill="#a0a0a0" shape-rendering="crispEdges"/><rect x="533" y="203" width="1" height="5" fill="#a0a0a0" shape-rendering="crispEdges"/><rect x="537" y="203" width="1" height="5" fill="#a0a0a0" shape-rendering="crispEdges"/><rect x="541" y="203" width="1" height="5" fill="#a0a0a0" shape-rendering="crispEdges"/><rect x="545" y="203" width="1" height="5" fill="#a0a0a0" shape-rendering="crispEdges"/><rect x="549" y="203" width="1" height="5" fill="#a0a0a0" shape-rendering="crispEdges"/><rect x="553" y="203" width="1" height="5" fill="#a0a0a0" shape-rendering="crispEdges"/><rect x="557" y="203" width="1" height="5" fill="#a0a0a0" shape-rendering="crispEdges"/><rect x="561" y="203" width="1" height="5" fill="#a0a0a0" shape-rendering="crispEdges"/><rect x="565" y="203" width="1" height="5" fill="#a0a0a0" shape-rendering="crispEdges"/><rect x="569" y="203" width="1" height="5" fill="#a0a0a0" shape-rendering="crispEdges"/><polyline points="93.5,202.6 97.5,182.6 101.5,137.8 105.5,203.4 109.5,201.2 113.5,197.6 117.5,205.2 121.5,187.4 125.5,147.4 129.5,205.5 133.5,205.5 137.5,205.5 141.5,207.8 145.5,205.2 149.5,203.3 153.5,205.5 157.5,207.8 161.5,205.2 165.5,207.8 169.5,198.6 173.5,203.4 177.5,202.6 181.5,207.8 185.5,203.4 189.5,205.5 193.5,205.5 197.5,205.5 201.5,202.6 205.5,198.6 209.5,197.2 213.5,207.8 217.5,205.5 221.5,207.8 225.5,205.5 229.5,207.8 233.5,202.6 237.5,205.5 241.5,205.5 245.5,207.8 249.5,204.5 253.5,201.5 257.5,205.5 261.5,207.8 265.5,205.5 269.5,201.5 273.5,205.5 277.5,207.8 281.5,205.5 285.5,201.5 289.5,201.5 293.5,197.6 297.5,193.5 301.5,202.6 305.5,194.7 309.5,205.5 313.5,203.4 317.5,187.4 321.5,134.6 325.5,201.5 329.5,200.1 333.5,197.6 337.5,205.5 341.5,207.8 345.5,205.5 349.5,207.8 353.5,205.5 357.5,207.8 361.5,197.6 365.5,205.5 369.5,205.5 373.5,207.8 377.5,202.6 381.5,197.6 385.5,205.5 389.5,203.4 393.5,205.5 397.5,207.8 401.5,203.4 405.5,197.6 409.5,200.1 413.5,207.8 417.5,205.5 421.5,207.8 425.5,191.3 429.5,205.5 433.5,205.5 437.5,202.6 441.5,205.5 445.5,207.8 449.5,207.8 453.5,205.5 457.5,161.5 461.5,205.5 465.5,205.5 469.5,207.8 473.5,207.8 477.5,205.5 481.5,204.5 485.5,205.5 489.5,205.5 493.5,207.8 497.5,205.5 501.5,203.4 505.5,200.5 509.5,207.8 513.5,197.6 517.5,201.5 521.5,199.4 525.5,207.8 529.5,207.8 533.5,205.5 537.5,201.5 541.5,205.5 545.5,204.5 549.5,207.8 553.5,204.5 557.5,207.8 561.5,205.5 565.5,207.8 569.5,205.5" fill="none" stroke="#5176cc" stroke-width="1"/><polygon points="93.5,200.7 95.4,202.6 93.5,204.5 91.6,202.6" fill="#3b62b8"/><polygon points="97.5,180.7 99.4,182.6 97.5,184.5 95.6,182.6" fill="#3b62b8"/><polygon points="101.5,135.9 103.4,137.8 101.5,139.70000000000002 99.6,137.8" fill="#3b62b8"/><polygon points="105.5,201.5 107.4,203.4 105.5,205.3 103.6,203.4" fill="#3b62b8"/><polygon points="109.5,199.29999999999998 111.4,201.2 109.5,203.1 107.6,201.2" fill="#3b62b8"/><polygon points="113.5,195.7 115.4,197.6 113.5,199.5 111.6,197.6" fill="#3b62b8"/><polygon points="117.5,203.29999999999998 119.4,205.2 117.5,207.1 115.6,205.2" fill="#3b62b8"/><polygon points="121.5,185.5 123.4,187.4 121.5,189.3 119.6,187.4" fill="#3b62b8"/><polygon points="125.5,145.5 127.4,147.4 125.5,149.3 123.6,147.4" fill="#3b62b8"/><polygon points="129.5,203.6 131.4,205.5 129.5,207.4 127.6,205.5" fill="#3b62b8"/><polygon points="133.5,203.6 135.4,205.5 133.5,207.4 131.6,205.5" fill="#3b62b8"/><polygon points="137.5,203.6 139.4,205.5 137.5,207.4 135.6,205.5" fill="#3b62b8"/><polygon points="141.5,205.9 143.4,207.8 141.5,209.70000000000002 139.6,207.8" fill="#3b62b8"/><polygon points="145.5,203.29999999999998 147.4,205.2 145.5,207.1 143.6,205.2" fill="#3b62b8"/><polygon points="149.5,201.4 151.4,203.3 149.5,205.20000000000002 147.6,203.3" fill="#3b62b8"/><polygon points="153.5,203.6 155.4,205.5 153.5,207.4 151.6,205.5" fill="#3b62b8"/><polygon points="157.5,205.9 159.4,207.8 157.5,209.70000000000002 155.6,207.8" fill="#3b62b8"/><polygon points="161.5,203.29999999999998 163.4,205.2 161.5,207.1 159.6,205.2" fill="#3b62b8"/><polygon points="165.5,205.9 167.4,207.8 165.5,209.70000000000002 163.6,207.8" fill="#3b62b8"/><polygon points="169.5,196.7 171.4,198.6 169.5,200.5 167.6,198.6" fill="#3b62b8"/><polygon points="173.5,201.5 175.4,203.4 173.5,205.3 171.6,203.4" fill="#3b62b8"/><polygon points="177.5,200.7 179.4,202.6 177.5,204.5 175.6,202.6" fill="#3b62b8"/><polygon points="181.5,205.9 183.4,207.8 181.5,209.70000000000002 179.6,207.8" fill="#3b62b8"/><polygon points="185.5,201.5 187.4,203.4 185.5,205.3 183.6,203.4" fill="#3b62b8"/><polygon points="189.5,203.6 191.4,205.5 189.5,207.4 187.6,205.5" fill="#3b62b8"/><polygon points="193.5,203.6 195.4,205.5 193.5,207.4 191.6,205.5" fill="#3b62b8"/><polygon points="197.5,203.6 199.4,205.5 197.5,207.4 195.6,205.5" fill="#3b62b8"/><polygon points="201.5,200.7 203.4,202.6 201.5,204.5 199.6,202.6" fill="#3b62b8"/><polygon points="205.5,196.7 207.4,198.6 205.5,200.5 203.6,198.6" fill="#3b62b8"/><polygon points="209.5,195.29999999999998 211.4,197.2 209.5,199.1 207.6,197.2" fill="#3b62b8"/><polygon points="213.5,205.9 215.4,207.8 213.5,209.70000000000002 211.6,207.8" fill="#3b62b8"/><polygon points="217.5,203.6 219.4,205.5 217.5,207.4 215.6,205.5" fill="#3b62b8"/><polygon points="221.5,205.9 223.4,207.8 221.5,209.70000000000002 219.6,207.8" fill="#3b62b8"/><polygon points="225.5,203.6 227.4,205.5 225.5,207.4 223.6,205.5" fill="#3b62b8"/><polygon points="229.5,205.9 231.4,207.8 229.5,209.70000000000002 227.6,207.8" fill="#3b62b8"/><polygon points="233.5,200.7 235.4,202.6 233.5,204.5 231.6,202.6" fill="#3b62b8"/><polygon points="237.5,203.6 239.4,205.5 237.5,207.4 235.6,205.5" fill="#3b62b8"/><polygon points="241.5,203.6 243.4,205.5 241.5,207.4 239.6,205.5" fill="#3b62b8"/><polygon points="245.5,205.9 247.4,207.8 245.5,209.70000000000002 243.6,207.8" fill="#3b62b8"/><polygon points="249.5,202.6 251.4,204.5 249.5,206.4 247.6,204.5" fill="#3b62b8"/><polygon points="253.5,199.6 255.4,201.5 253.5,203.4 251.6,201.5" fill="#3b62b8"/><polygon points="257.5,203.6 259.4,205.5 257.5,207.4 255.6,205.5" fill="#3b62b8"/><polygon points="261.5,205.9 263.4,207.8 261.5,209.70000000000002 259.6,207.8" fill="#3b62b8"/><polygon points="265.5,203.6 267.4,205.5 265.5,207.4 263.6,205.5" fill="#3b62b8"/><polygon points="269.5,199.6 271.4,201.5 269.5,203.4 267.6,201.5" fill="#3b62b8"/><polygon points="273.5,203.6 275.4,205.5 273.5,207.4 271.6,205.5" fill="#3b62b8"/><polygon points="277.5,205.9 279.4,207.8 277.5,209.70000000000002 275.6,207.8" fill="#3b62b8"/><polygon points="281.5,203.6 283.4,205.5 281.5,207.4 279.6,205.5" fill="#3b62b8"/><polygon points="285.5,199.6 287.4,201.5 285.5,203.4 283.6,201.5" fill="#3b62b8"/><polygon points="289.5,199.6 291.4,201.5 289.5,203.4 287.6,201.5" fill="#3b62b8"/><polygon points="293.5,195.7 295.4,197.6 293.5,199.5 291.6,197.6" fill="#3b62b8"/><polygon points="297.5,191.6 299.4,193.5 297.5,195.4 295.6,193.5" fill="#3b62b8"/><polygon points="301.5,200.7 303.4,202.6 301.5,204.5 299.6,202.6" fill="#3b62b8"/><polygon points="305.5,192.79999999999998 307.4,194.7 305.5,196.6 303.6,194.7" fill="#3b62b8"/><polygon points="309.5,203.6 311.4,205.5 309.5,207.4 307.6,205.5" fill="#3b62b8"/><polygon points="313.5,201.5 315.4,203.4 313.5,205.3 311.6,203.4" fill="#3b62b8"/><polygon points="317.5,185.5 319.4,187.4 317.5,189.3 315.6,187.4" fill="#3b62b8"/><polygon points="321.5,132.7 323.4,134.6 321.5,136.5 319.6,134.6" fill="#3b62b8"/><polygon points="325.5,199.6 327.4,201.5 325.5,203.4 323.6,201.5" fill="#3b62b8"/><polygon points="329.5,198.2 331.4,200.1 329.5,202.0 327.6,200.1" fill="#3b62b8"/><polygon points="333.5,195.7 335.4,197.6 333.5,199.5 331.6,197.6" fill="#3b62b8"/><polygon points="337.5,203.6 339.4,205.5 337.5,207.4 335.6,205.5" fill="#3b62b8"/><polygon points="341.5,205.9 343.4,207.8 341.5,209.70000000000002 339.6,207.8" fill="#3b62b8"/><polygon points="345.5,203.6 347.4,205.5 345.5,207.4 343.6,205.5" fill="#3b62b8"/><polygon points="349.5,205.9 351.4,207.8 349.5,209.70000000000002 347.6,207.8" fill="#3b62b8"/><polygon points="353.5,203.6 355.4,205.5 353.5,207.4 351.6,205.5" fill="#3b62b8"/><polygon points="357.5,205.9 359.4,207.8 357.5,209.70000000000002 355.6,207.8" fill="#3b62b8"/><polygon points="361.5,195.7 363.4,197.6 361.5,199.5 359.6,197.6" fill="#3b62b8"/><polygon points="365.5,203.6 367.4,205.5 365.5,207.4 363.6,205.5" fill="#3b62b8"/><polygon points="369.5,203.6 371.4,205.5 369.5,207.4 367.6,205.5" fill="#3b62b8"/><polygon points="373.5,205.9 375.4,207.8 373.5,209.70000000000002 371.6,207.8" fill="#3b62b8"/><polygon points="377.5,200.7 379.4,202.6 377.5,204.5 375.6,202.6" fill="#3b62b8"/><polygon points="381.5,195.7 383.4,197.6 381.5,199.5 379.6,197.6" fill="#3b62b8"/><polygon points="385.5,203.6 387.4,205.5 385.5,207.4 383.6,205.5" fill="#3b62b8"/><polygon points="389.5,201.5 391.4,203.4 389.5,205.3 387.6,203.4" fill="#3b62b8"/><polygon points="393.5,203.6 395.4,205.5 393.5,207.4 391.6,205.5" fill="#3b62b8"/><polygon points="397.5,205.9 399.4,207.8 397.5,209.70000000000002 395.6,207.8" fill="#3b62b8"/><polygon points="401.5,201.5 403.4,203.4 401.5,205.3 399.6,203.4" fill="#3b62b8"/><polygon points="405.5,195.7 407.4,197.6 405.5,199.5 403.6,197.6" fill="#3b62b8"/><polygon points="409.5,198.2 411.4,200.1 409.5,202.0 407.6,200.1" fill="#3b62b8"/><polygon points="413.5,205.9 415.4,207.8 413.5,209.70000000000002 411.6,207.8" fill="#3b62b8"/><polygon points="417.5,203.6 419.4,205.5 417.5,207.4 415.6,205.5" fill="#3b62b8"/><polygon points="421.5,205.9 423.4,207.8 421.5,209.70000000000002 419.6,207.8" fill="#3b62b8"/><polygon points="425.5,189.4 427.4,191.3 425.5,193.20000000000002 423.6,191.3" fill="#3b62b8"/><polygon points="429.5,203.6 431.4,205.5 429.5,207.4 427.6,205.5" fill="#3b62b8"/><polygon points="433.5,203.6 435.4,205.5 433.5,207.4 431.6,205.5" fill="#3b62b8"/><polygon points="437.5,200.7 439.4,202.6 437.5,204.5 435.6,202.6" fill="#3b62b8"/><polygon points="441.5,203.6 443.4,205.5 441.5,207.4 439.6,205.5" fill="#3b62b8"/><polygon points="445.5,205.9 447.4,207.8 445.5,209.70000000000002 443.6,207.8" fill="#3b62b8"/><polygon points="449.5,205.9 451.4,207.8 449.5,209.70000000000002 447.6,207.8" fill="#3b62b8"/><polygon points="453.5,203.6 455.4,205.5 453.5,207.4 451.6,205.5" fill="#3b62b8"/><polygon points="457.5,159.6 459.4,161.5 457.5,163.4 455.6,161.5" fill="#3b62b8"/><polygon points="461.5,203.6 463.4,205.5 461.5,207.4 459.6,205.5" fill="#3b62b8"/><polygon points="465.5,203.6 467.4,205.5 465.5,207.4 463.6,205.5" fill="#3b62b8"/><polygon points="469.5,205.9 471.4,207.8 469.5,209.70000000000002 467.6,207.8" fill="#3b62b8"/><polygon points="473.5,205.9 475.4,207.8 473.5,209.70000000000002 471.6,207.8" fill="#3b62b8"/><polygon points="477.5,203.6 479.4,205.5 477.5,207.4 475.6,205.5" fill="#3b62b8"/><polygon points="481.5,202.6 483.4,204.5 481.5,206.4 479.6,204.5" fill="#3b62b8"/><polygon points="485.5,203.6 487.4,205.5 485.5,207.4 483.6,205.5" fill="#3b62b8"/><polygon points="489.5,203.6 491.4,205.5 489.5,207.4 487.6,205.5" fill="#3b62b8"/><polygon points="493.5,205.9 495.4,207.8 493.5,209.70000000000002 491.6,207.8" fill="#3b62b8"/><polygon points="497.5,203.6 499.4,205.5 497.5,207.4 495.6,205.5" fill="#3b62b8"/><polygon points="501.5,201.5 503.4,203.4 501.5,205.3 499.6,203.4" fill="#3b62b8"/><polygon points="505.5,198.6 507.4,200.5 505.5,202.4 503.6,200.5" fill="#3b62b8"/><polygon points="509.5,205.9 511.4,207.8 509.5,209.70000000000002 507.6,207.8" fill="#3b62b8"/><polygon points="513.5,195.7 515.4,197.6 513.5,199.5 511.6,197.6" fill="#3b62b8"/><polygon points="517.5,199.6 519.4,201.5 517.5,203.4 515.6,201.5" fill="#3b62b8"/><polygon points="521.5,197.5 523.4,199.4 521.5,201.3 519.6,199.4" fill="#3b62b8"/><polygon points="525.5,205.9 527.4,207.8 525.5,209.70000000000002 523.6,207.8" fill="#3b62b8"/><polygon points="529.5,205.9 531.4,207.8 529.5,209.70000000000002 527.6,207.8" fill="#3b62b8"/><polygon points="533.5,203.6 535.4,205.5 533.5,207.4 531.6,205.5" fill="#3b62b8"/><polygon points="537.5,199.6 539.4,201.5 537.5,203.4 535.6,201.5" fill="#3b62b8"/><polygon points="541.5,203.6 543.4,205.5 541.5,207.4 539.6,205.5" fill="#3b62b8"/><polygon points="545.5,202.6 547.4,204.5 545.5,206.4 543.6,204.5" fill="#3b62b8"/><polygon points="549.5,205.9 551.4,207.8 549.5,209.70000000000002 547.6,207.8" fill="#3b62b8"/><polygon points="553.5,202.6 555.4,204.5 553.5,206.4 551.6,204.5" fill="#3b62b8"/><polygon points="557.5,205.9 559.4,207.8 557.5,209.70000000000002 555.6,207.8" fill="#3b62b8"/><polygon points="561.5,203.6 563.4,205.5 561.5,207.4 559.6,205.5" fill="#3b62b8"/><polygon points="565.5,205.9 567.4,207.8 565.5,209.70000000000002 563.6,207.8" fill="#3b62b8"/><polygon points="569.5,203.6 571.4,205.5 569.5,207.4 567.6,205.5" fill="#3b62b8"/><defs>
<linearGradient id="g4064b4" x1="0" y1="0" x2="0" y2="1"><stop offset="0" stop-color="#5679d0"/><stop offset="0.09" stop-color="#5679d0"/><stop offset="0.09" stop-color="#4c6fc7"/><stop offset="0.40" stop-color="#4c6fc7"/><stop offset="0.46" stop-color="#4566b6"/><stop offset="0.78" stop-color="#4566b6"/><stop offset="0.83" stop-color="#3e5caa"/><stop offset="1" stop-color="#3e5caa"/></linearGradient>
<linearGradient id="gf07000" x1="0" y1="0" x2="0" y2="1"><stop offset="0" stop-color="#ef7000"/><stop offset="0.38" stop-color="#ef7000"/><stop offset="0.52" stop-color="#d86700"/><stop offset="0.78" stop-color="#d26400"/><stop offset="0.84" stop-color="#c25900"/><stop offset="1" stop-color="#c05800"/></linearGradient>
</defs><rect x="92" y="297" width="199" height="28" fill="#e9e9fc" shape-rendering="crispEdges"/><rect x="86" y="326" width="206" height="1" fill="#a0a0a0" shape-rendering="crispEdges"/><rect x="91" y="296" width="201" height="1" fill="#a0a0a0" shape-rendering="crispEdges"/><rect x="91" y="356" width="201" height="1" fill="#a0a0a0" shape-rendering="crispEdges"/><rect x="91" y="296" width="1" height="61" fill="#a0a0a0" shape-rendering="crispEdges"/><rect x="291" y="296" width="1" height="61" fill="#a0a0a0" shape-rendering="crispEdges"/><rect x="101" y="352" width="1" height="5" fill="#a0a0a0" shape-rendering="crispEdges"/><rect x="121" y="352" width="1" height="5" fill="#a0a0a0" shape-rendering="crispEdges"/><rect x="141" y="352" width="1" height="5" fill="#a0a0a0" shape-rendering="crispEdges"/><rect x="161" y="352" width="1" height="5" fill="#a0a0a0" shape-rendering="crispEdges"/><rect x="181" y="352" width="1" height="5" fill="#a0a0a0" shape-rendering="crispEdges"/><rect x="201" y="352" width="1" height="5" fill="#a0a0a0" shape-rendering="crispEdges"/><rect x="221" y="352" width="1" height="5" fill="#a0a0a0" shape-rendering="crispEdges"/><rect x="241" y="352" width="1" height="5" fill="#a0a0a0" shape-rendering="crispEdges"/><rect x="261" y="352" width="1" height="5" fill="#a0a0a0" shape-rendering="crispEdges"/><rect x="281" y="352" width="1" height="5" fill="#a0a0a0" shape-rendering="crispEdges"/><rect x="94" y="300" width="16" height="56" fill="url(#g4064b4)" shape-rendering="crispEdges"/><rect x="94.5" y="300.5" width="15" height="55" fill="none" stroke="#3a5bb0" stroke-width="1" shape-rendering="crispEdges"/><rect x="114" y="300" width="16" height="56" fill="#58a858" shape-rendering="crispEdges"/><rect x="134" y="353" width="16" height="3" fill="#c0283a" shape-rendering="crispEdges"/><rect x="154" y="354" width="16" height="2" fill="#d4a017" shape-rendering="crispEdges"/><rect x="174" y="354" width="16" height="2" fill="#3f8fc0" shape-rendering="crispEdges"/><rect x="194" y="354" width="16" height="2" fill="#d86a18" shape-rendering="crispEdges"/><rect x="214" y="354" width="16" height="2" fill="#4060c0" shape-rendering="crispEdges"/><rect x="234" y="355" width="16" height="1" fill="#26507e" shape-rendering="crispEdges"/><rect x="254" y="355" width="16" height="1" fill="#20a0ac" shape-rendering="crispEdges"/><rect x="274" y="355" width="16" height="1" fill="#a8a85a" shape-rendering="crispEdges"/><rect x="421" y="297" width="239" height="28" fill="#e9e9fc" shape-rendering="crispEdges"/><rect x="415" y="326" width="246" height="1" fill="#a0a0a0" shape-rendering="crispEdges"/><rect x="420" y="296" width="241" height="1" fill="#a0a0a0" shape-rendering="crispEdges"/><rect x="420" y="356" width="241" height="1" fill="#a0a0a0" shape-rendering="crispEdges"/><rect x="420" y="296" width="1" height="61" fill="#a0a0a0" shape-rendering="crispEdges"/><rect x="660" y="296" width="1" height="61" fill="#a0a0a0" shape-rendering="crispEdges"/><rect x="432" y="352" width="1" height="5" fill="#a0a0a0" shape-rendering="crispEdges"/><rect x="456" y="352" width="1" height="5" fill="#a0a0a0" shape-rendering="crispEdges"/><rect x="480" y="352" width="1" height="5" fill="#a0a0a0" shape-rendering="crispEdges"/><rect x="504" y="352" width="1" height="5" fill="#a0a0a0" shape-rendering="crispEdges"/><rect x="528" y="352" width="1" height="5" fill="#a0a0a0" shape-rendering="crispEdges"/><rect x="552" y="352" width="1" height="5" fill="#a0a0a0" shape-rendering="crispEdges"/><rect x="576" y="352" width="1" height="5" fill="#a0a0a0" shape-rendering="crispEdges"/><rect x="600" y="352" width="1" height="5" fill="#a0a0a0" shape-rendering="crispEdges"/><rect x="624" y="352" width="1" height="5" fill="#a0a0a0" shape-rendering="crispEdges"/><rect x="648" y="352" width="1" height="5" fill="#a0a0a0" shape-rendering="crispEdges"/><rect x="423" y="300" width="19" height="56" fill="url(#g4064b4)" shape-rendering="crispEdges"/><rect x="423.5" y="300.5" width="18" height="55" fill="none" stroke="#3a5bb0" stroke-width="1" shape-rendering="crispEdges"/><rect x="447" y="317" width="19" height="39" fill="#58a858" shape-rendering="crispEdges"/><rect x="471" y="348" width="19" height="8" fill="#c0283a" shape-rendering="crispEdges"/><rect x="495" y="353" width="19" height="3" fill="#d4a017" shape-rendering="crispEdges"/><rect x="519" y="354" width="19" height="2" fill="#3f8fc0" shape-rendering="crispEdges"/><rect x="543" y="354" width="19" height="2" fill="#d86a18" shape-rendering="crispEdges"/><rect x="567" y="354" width="19" height="2" fill="#4060c0" shape-rendering="crispEdges"/><rect x="591" y="355" width="19" height="1" fill="#26507e" shape-rendering="crispEdges"/><rect x="615" y="355" width="19" height="1" fill="#20a0ac" shape-rendering="crispEdges"/><rect x="639" y="355" width="19" height="1" fill="#a8a85a" shape-rendering="crispEdges"/><rect x="92" y="472" width="206" height="25" fill="#e9e9fc" shape-rendering="crispEdges"/><rect x="86" y="471" width="213" height="1" fill="#a0a0a0" shape-rendering="crispEdges"/><rect x="86" y="498" width="213" height="1" fill="#a0a0a0" shape-rendering="crispEdges"/><rect x="91" y="445" width="208" height="1" fill="#a0a0a0" shape-rendering="crispEdges"/><rect x="91" y="525" width="208" height="1" fill="#a0a0a0" shape-rendering="crispEdges"/><rect x="91" y="445" width="1" height="81" fill="#a0a0a0" shape-rendering="crispEdges"/><rect x="298" y="445" width="1" height="81" fill="#a0a0a0" shape-rendering="crispEdges"/><rect x="103" y="521" width="1" height="5" fill="#a0a0a0" shape-rendering="crispEdges"/><rect x="126" y="521" width="1" height="5" fill="#a0a0a0" shape-rendering="crispEdges"/><rect x="149" y="521" width="1" height="5" fill="#a0a0a0" shape-rendering="crispEdges"/><rect x="172" y="521" width="1" height="5" fill="#a0a0a0" shape-rendering="crispEdges"/><rect x="195" y="521" width="1" height="5" fill="#a0a0a0" shape-rendering="crispEdges"/><rect x="218" y="521" width="1" height="5" fill="#a0a0a0" shape-rendering="crispEdges"/><rect x="241" y="521" width="1" height="5" fill="#a0a0a0" shape-rendering="crispEdges"/><rect x="264" y="521" width="1" height="5" fill="#a0a0a0" shape-rendering="crispEdges"/><rect x="287" y="521" width="1" height="5" fill="#a0a0a0" shape-rendering="crispEdges"/><rect x="94" y="448" width="18" height="77" fill="url(#g4064b4)" shape-rendering="crispEdges"/><rect x="94.5" y="448.5" width="17" height="76" fill="none" stroke="#3a5bb0" stroke-width="1" shape-rendering="crispEdges"/><rect x="117" y="521" width="18" height="4" fill="#58a858" shape-rendering="crispEdges"/><rect x="140" y="521" width="18" height="4" fill="#c0283a" shape-rendering="crispEdges"/><rect x="163" y="522" width="18" height="3" fill="#d4a017" shape-rendering="crispEdges"/><rect x="186" y="522" width="18" height="3" fill="#3f8fc0" shape-rendering="crispEdges"/><rect x="209" y="523" width="18" height="2" fill="#d86a18" shape-rendering="crispEdges"/><rect x="232" y="524" width="18" height="1" fill="#4060c0" shape-rendering="crispEdges"/><rect x="255" y="524" width="18" height="1" fill="#26507e" shape-rendering="crispEdges"/><rect x="421" y="473" width="244" height="25" fill="#e9e9fc" shape-rendering="crispEdges"/><rect x="415" y="472" width="251" height="1" fill="#a0a0a0" shape-rendering="crispEdges"/><rect x="415" y="499" width="251" height="1" fill="#a0a0a0" shape-rendering="crispEdges"/><rect x="420" y="445" width="246" height="1" fill="#a0a0a0" shape-rendering="crispEdges"/><rect x="420" y="525" width="246" height="1" fill="#a0a0a0" shape-rendering="crispEdges"/><rect x="420" y="445" width="1" height="81" fill="#a0a0a0" shape-rendering="crispEdges"/><rect x="665" y="445" width="1" height="81" fill="#a0a0a0" shape-rendering="crispEdges"/><rect x="438" y="521" width="1" height="5" fill="#a0a0a0" shape-rendering="crispEdges"/><rect x="473" y="521" width="1" height="5" fill="#a0a0a0" shape-rendering="crispEdges"/><rect x="508" y="521" width="1" height="5" fill="#a0a0a0" shape-rendering="crispEdges"/><rect x="543" y="521" width="1" height="5" fill="#a0a0a0" shape-rendering="crispEdges"/><rect x="578" y="521" width="1" height="5" fill="#a0a0a0" shape-rendering="crispEdges"/><rect x="613" y="521" width="1" height="5" fill="#a0a0a0" shape-rendering="crispEdges"/><rect x="648" y="521" width="1" height="5" fill="#a0a0a0" shape-rendering="crispEdges"/><rect x="425" y="517" width="27" height="8" fill="#4064b4" shape-rendering="crispEdges"/><rect x="460" y="515" width="27" height="10" fill="#58a858" shape-rendering="crispEdges"/><rect x="495" y="519" width="27" height="6" fill="#c0283a" shape-rendering="crispEdges"/><rect x="530" y="523" width="27" height="2" fill="#d4a017" shape-rendering="crispEdges"/><rect x="565" y="523" width="27" height="2" fill="#3f8fc0" shape-rendering="crispEdges"/><rect x="600" y="448" width="27" height="77" fill="url(#gf07000)" shape-rendering="crispEdges"/><rect x="600.5" y="448.5" width="26" height="76" fill="none" stroke="#c85c00" stroke-width="1" shape-rendering="crispEdges"/></svg>
<div style="position:absolute;left:38.0px;top:144px;font:normal 11px/20px 'Liberation Sans', sans-serif;color:#000;white-space:nowrap;transform:scaleX(1.0164);transform-origin:0 0;">2.148 KB</div>
<div style="position:absolute;left:38.0px;top:171px;font:normal 11px/20px 'Liberation Sans', sans-serif;color:#000;white-space:nowrap;transform:scaleX(1.0164);transform-origin:0 0;">1.074 KB</div>
<div style="position:absolute;left:64.5px;top:197px;font:normal 11px/20px 'Liberation Sans', sans-serif;color:#000;white-space:nowrap;transform:scaleX(0.9199);transform-origin:0 0;">0&nbsp;&nbsp;B</div>
<div style="position:absolute;left:83.5px;top:211px;font:normal 11px/20px 'Liberation Sans', sans-serif;color:#000;white-space:nowrap;transform:scaleX(0.9809);transform-origin:0 0;">09:25:37</div>
<div style="position:absolute;left:163.5px;top:211px;font:normal 11px/20px 'Liberation Sans', sans-serif;color:#000;white-space:nowrap;transform:scaleX(0.9809);transform-origin:0 0;">09:25:57</div>
<div style="position:absolute;left:243.5px;top:211px;font:normal 11px/20px 'Liberation Sans', sans-serif;color:#000;white-space:nowrap;transform:scaleX(0.9809);transform-origin:0 0;">09:26:17</div>
<div style="position:absolute;left:323.5px;top:211px;font:normal 11px/20px 'Liberation Sans', sans-serif;color:#000;white-space:nowrap;transform:scaleX(0.9809);transform-origin:0 0;">09:26:37</div>
<div style="position:absolute;left:403.5px;top:211px;font:normal 11px/20px 'Liberation Sans', sans-serif;color:#000;white-space:nowrap;transform:scaleX(0.9809);transform-origin:0 0;">09:26:57</div>
<div style="position:absolute;left:483.5px;top:211px;font:normal 11px/20px 'Liberation Sans', sans-serif;color:#000;white-space:nowrap;transform:scaleX(0.9809);transform-origin:0 0;">09:27:17</div>
<div style="position:absolute;left:26.0px;top:287px;font:normal 11px/20px 'Liberation Sans', sans-serif;color:#000;white-space:nowrap;transform:scaleX(0.9914);transform-origin:0 0;">390.625 KB</div>
<div style="position:absolute;left:26.0px;top:316px;font:normal 11px/20px 'Liberation Sans', sans-serif;color:#000;white-space:nowrap;transform:scaleX(0.9914);transform-origin:0 0;">195.313 KB</div>
<div style="position:absolute;left:64.5px;top:346px;font:normal 11px/20px 'Liberation Sans', sans-serif;color:#000;white-space:nowrap;transform:scaleX(0.9199);transform-origin:0 0;">0&nbsp;&nbsp;B</div>
<div style="position:absolute;left:355.0px;top:287px;font:normal 11px/20px 'Liberation Sans', sans-serif;color:#000;white-space:nowrap;transform:scaleX(0.9914);transform-origin:0 0;">390.625 KB</div>
<div style="position:absolute;left:355.0px;top:316px;font:normal 11px/20px 'Liberation Sans', sans-serif;color:#000;white-space:nowrap;transform:scaleX(0.9914);transform-origin:0 0;">195.313 KB</div>
<div style="position:absolute;left:393.5px;top:346px;font:normal 11px/20px 'Liberation Sans', sans-serif;color:#000;white-space:nowrap;transform:scaleX(0.9199);transform-origin:0 0;">0&nbsp;&nbsp;B</div>
<div style="position:absolute;left:26.0px;top:461px;font:normal 11px/20px 'Liberation Sans', sans-serif;color:#000;white-space:nowrap;transform:scaleX(0.9914);transform-origin:0 0;">234.375 KB</div>
<div style="position:absolute;left:26.0px;top:488px;font:normal 11px/20px 'Liberation Sans', sans-serif;color:#000;white-space:nowrap;transform:scaleX(1.0057);transform-origin:0 0;">117.188 KB</div>
<div style="position:absolute;left:64.5px;top:515px;font:normal 11px/20px 'Liberation Sans', sans-serif;color:#000;white-space:nowrap;transform:scaleX(0.9199);transform-origin:0 0;">0&nbsp;&nbsp;B</div>
<div style="position:absolute;left:355.0px;top:436px;font:normal 11px/20px 'Liberation Sans', sans-serif;color:#000;white-space:nowrap;transform:scaleX(0.9914);transform-origin:0 0;">322.266 KB</div>
<div style="position:absolute;left:355.0px;top:462px;font:normal 11px/20px 'Liberation Sans', sans-serif;color:#000;white-space:nowrap;transform:scaleX(0.9914);transform-origin:0 0;">214.844 KB</div>
<div style="position:absolute;left:355.0px;top:489px;font:normal 11px/20px 'Liberation Sans', sans-serif;color:#000;white-space:nowrap;transform:scaleX(0.9914);transform-origin:0 0;">107.422 KB</div>
<div style="position:absolute;left:393.5px;top:515px;font:normal 11px/20px 'Liberation Sans', sans-serif;color:#000;white-space:nowrap;transform:scaleX(0.9199);transform-origin:0 0;">0&nbsp;&nbsp;B</div>
</body></html>
